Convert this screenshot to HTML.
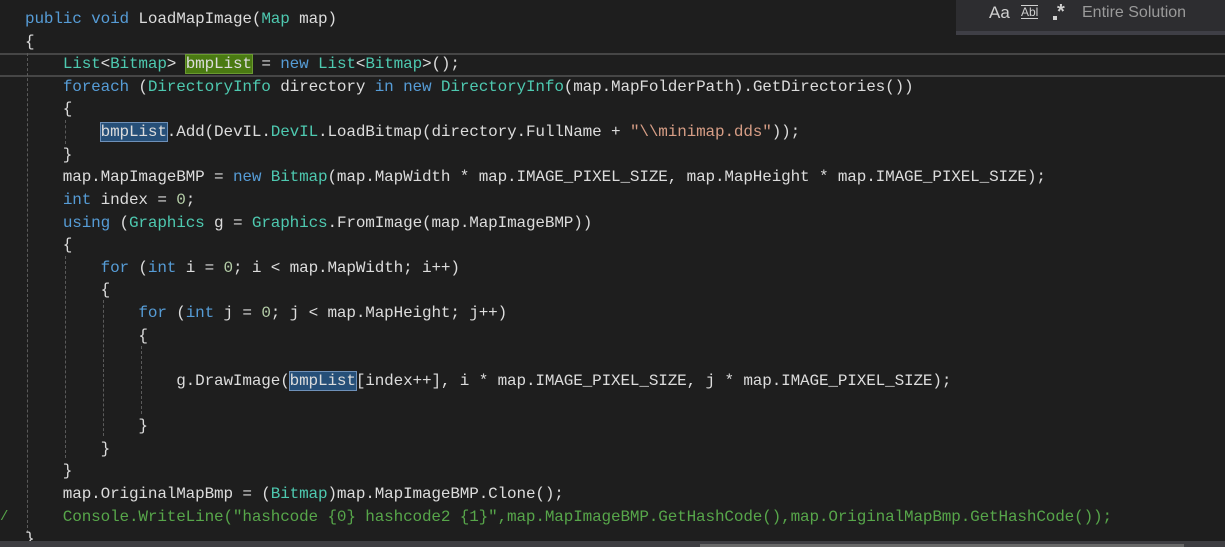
<!DOCTYPE html>
<html><head><meta charset="utf-8"><style>
html,body{margin:0;padding:0;background:#1e1e1e;width:1225px;height:547px;overflow:hidden;position:relative}
.l{position:absolute;left:25px;height:22px;line-height:22px;white-space:pre;font-family:"Liberation Mono",monospace;font-size:16px;letter-spacing:-0.15px;color:#dcdcdc}
.k{color:#569cd6}.t{color:#4ec9b0}.s{color:#d69d85}.n{color:#b5cea8}.c{color:#57a64a}
.g{position:absolute;width:0;border-left:1px dashed #5a5a5a}
.hg{background:#4a7a12;outline:1px solid #6a9a30}
.hb{background:#264f78;outline:1px solid #6e90b8}
</style></head><body>
<div style="position:absolute;left:0;top:53px;width:1225px;height:20px;border-top:2px solid #464646;border-bottom:2px solid #464646"></div>
<div class="g" style="left:27px;top:53px;height:480px"></div>
<div class="g" style="left:65px;top:120px;height:24px"></div>
<div class="g" style="left:65px;top:256px;height:202px"></div>
<div class="g" style="left:103px;top:300px;height:136px"></div>
<div class="g" style="left:141px;top:346px;height:68px"></div>
<div class="l" style="top:8px"><span class="k">public</span> <span class="k">void</span> LoadMapImage(<span class="t">Map</span> map)</div>
<div class="l" style="top:31px">{</div>
<div class="l" style="top:53px">    <span class="t">List</span>&lt;<span class="t">Bitmap</span>&gt; <span class="hg">bmpList</span> = <span class="k">new</span> <span class="t">List</span>&lt;<span class="t">Bitmap</span>&gt;();</div>
<div class="l" style="top:76px">    <span class="k">foreach</span> (<span class="t">DirectoryInfo</span> directory <span class="k">in</span> <span class="k">new</span> <span class="t">DirectoryInfo</span>(map.MapFolderPath).GetDirectories())</div>
<div class="l" style="top:98px">    {</div>
<div class="l" style="top:121px">        <span class="hb">bmpList</span>.Add(DevIL.<span class="t">DevIL</span>.LoadBitmap(directory.FullName + <span class="s">"\\minimap.dds"</span>));</div>
<div class="l" style="top:144px">    }</div>
<div class="l" style="top:166px">    map.MapImageBMP = <span class="k">new</span> <span class="t">Bitmap</span>(map.MapWidth * map.IMAGE_PIXEL_SIZE, map.MapHeight * map.IMAGE_PIXEL_SIZE);</div>
<div class="l" style="top:189px">    <span class="k">int</span> index = <span class="n">0</span>;</div>
<div class="l" style="top:212px">    <span class="k">using</span> (<span class="t">Graphics</span> g = <span class="t">Graphics</span>.FromImage(map.MapImageBMP))</div>
<div class="l" style="top:234px">    {</div>
<div class="l" style="top:257px">        <span class="k">for</span> (<span class="k">int</span> i = <span class="n">0</span>; i &lt; map.MapWidth; i++)</div>
<div class="l" style="top:279px">        {</div>
<div class="l" style="top:302px">            <span class="k">for</span> (<span class="k">int</span> j = <span class="n">0</span>; j &lt; map.MapHeight; j++)</div>
<div class="l" style="top:325px">            {</div>
<div class="l" style="top:370px">                g.DrawImage(<span class="hb">bmpList</span>[index++], i * map.IMAGE_PIXEL_SIZE, j * map.IMAGE_PIXEL_SIZE);</div>
<div class="l" style="top:415px">            }</div>
<div class="l" style="top:438px">        }</div>
<div class="l" style="top:460px">    }</div>
<div class="l" style="top:483px">    map.OriginalMapBmp = (<span class="t">Bitmap</span>)map.MapImageBMP.Clone();</div>
<div class="l c" style="top:506px">    Console.WriteLine("hashcode {0} hashcode2 {1}",map.MapImageBMP.GetHashCode(),map.OriginalMapBmp.GetHashCode());</div>
<div class="l" style="top:528px">}</div>
<div style="position:absolute;left:0;top:509px;color:#57a64a;font-family:'Liberation Mono',monospace;font-size:14px">/</div>
<div style="position:absolute;left:956px;top:0;width:269px;height:31px;background:#2d2d30;border-bottom:4px solid #3f3f46"></div>
<div style="position:absolute;left:989px;top:3px;font-family:'Liberation Sans',sans-serif;font-size:17px;color:#d0d0d0">Aa</div>
<div style="position:absolute;left:1021px;top:5px;font-family:'Liberation Sans',sans-serif;font-size:12px;color:#d0d0d0;border-top:1px solid #d0d0d0;border-bottom:1px solid #d0d0d0;line-height:12px">Abl</div>
<div style="position:absolute;left:1053px;top:16px;width:4px;height:4px;background:#d0d0d0"></div>
<div style="position:absolute;left:1057px;top:1px;font-family:'Liberation Sans',sans-serif;font-size:20px;font-weight:bold;color:#d0d0d0">*</div>
<div style="position:absolute;left:1082px;top:4px;font-family:'Liberation Sans',sans-serif;font-size:16px;color:#9a9a9a">Entire Solution</div>
<div style="position:absolute;left:0;top:541px;width:1225px;height:6px;background:#3e3e42"></div>
<div style="position:absolute;left:700px;top:544px;width:484px;height:3px;background:#686868"></div>
</body></html>
